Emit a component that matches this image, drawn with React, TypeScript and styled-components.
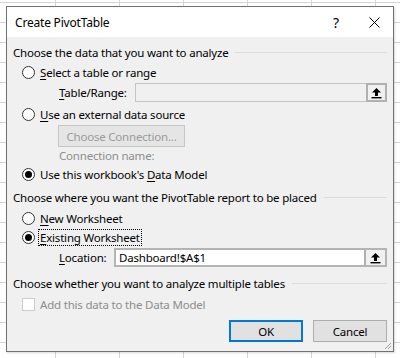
import React from 'react'
import styled, { createGlobalStyle } from 'styled-components'

const GlobalStyle = createGlobalStyle`
  html, body {
    margin: 0;
    padding: 0;
  }
  body {
    width: 400px;
    height: 358px;
    overflow: hidden;
    font-family: 'Noto Sans', 'Liberation Sans', sans-serif;
    font-size: 11.5px;
    letter-spacing: -0.2px;
    color: #000;
    background-color: #fff;
    background-image:
      repeating-linear-gradient(to right, transparent 0, transparent 55px, #d4d4d4 55px, #d4d4d4 56px, transparent 56px, transparent 64px),
      repeating-linear-gradient(to bottom, transparent 0, transparent 2px, #d4d4d4 2px, #d4d4d4 3px, transparent 3px, transparent 20px);
  }
`

const Page = styled.div`
  padding: 6px 0 0 6px;
`

const Dialog = styled.div`
  width: 388px;
  height: 346px;
  box-sizing: border-box;
  border: 1px solid #707070;
  background: #f0f0f0;
  display: flex;
  flex-direction: column;
  position: relative;
  box-shadow: 1px 1px 2px rgba(0, 0, 0, 0.15);
`

const TitleBar = styled.div`
  height: 30px;
  background: #fff;
  display: flex;
  align-items: center;
  padding: 0 0 0 8px;
  font-size: 12px;
`

const Title = styled.div`
  flex: 1;
`

const TitleButton = styled.div`
  width: 38px;
  height: 30px;
  display: flex;
  align-items: center;
  justify-content: center;
  font-size: 14px;
`

const Body = styled.div`
  display: flex;
  flex-direction: column;
  padding: 5px 6px 0 6px;
`

const SectionHeader = styled.div<{ $top?: number }>`
  height: 20px;
  margin-top: ${(p) => p.$top ?? 0}px;
  display: flex;
  align-items: center;
  gap: 7px;
  &::after {
    content: '';
    flex: 1;
    height: 1px;
    background: #dcdcdc;
  }
`

const OptionRow = styled.div<{ $top?: number; $height?: number; $indent?: number }>`
  height: ${(p) => p.$height ?? 20}px;
  margin-top: ${(p) => p.$top ?? 0}px;
  padding-left: ${(p) => p.$indent ?? 9}px;
  display: flex;
  align-items: center;
  gap: 4px;
`

const Radio = styled.span<{ $checked?: boolean }>`
  width: 13px;
  height: 13px;
  box-sizing: border-box;
  border: 1px solid #333;
  border-radius: 50%;
  background: #fff;
  display: flex;
  align-items: center;
  justify-content: center;
  &::after {
    content: '';
    width: 7px;
    height: 7px;
    border-radius: 50%;
    background: #000;
    display: ${(p) => (p.$checked ? 'block' : 'none')};
  }
`

const Checkbox = styled.span`
  width: 13px;
  height: 13px;
  box-sizing: border-box;
  border: 1px solid #cccccc;
  background: #fff;
`

const Label = styled.span<{ $disabled?: boolean; $focused?: boolean }>`
  color: ${(p) => (p.$disabled ? '#8d8d8d' : '#000')};
  outline: ${(p) => (p.$focused ? '1px dotted #000' : 'none')};
  padding: 0 1px;
  line-height: 15px;
`

const Key = styled.span`
  text-decoration: underline;
  text-underline-offset: 2px;
`

const FieldRow = styled.div<{ $top?: number; $labelWidth: number }>`
  height: 19px;
  margin-top: ${(p) => p.$top ?? 0}px;
  padding-left: 45px;
  display: grid;
  grid-template-columns: ${(p) => p.$labelWidth}px 1fr;
  align-items: center;
`

const Field = styled.div<{ $active?: boolean }>`
  height: 19px;
  box-sizing: border-box;
  display: flex;
  border: ${(p) => (p.$active ? '2px solid #b4b4b4' : '1px solid #c4c4c4')};
  background: ${(p) => (p.$active ? '#fff' : '#f0f0f0')};
`

const FieldText = styled.div`
  flex: 1;
  display: flex;
  align-items: center;
  padding-left: 3px;
  line-height: 15px;
`

const CollapseButton = styled.div<{ $active?: boolean }>`
  width: 21px;
  box-sizing: border-box;
  border: ${(p) => (p.$active ? 'none' : '2px solid #b0b0b0')};
  border-left: 2px solid #b0b0b0;
  margin: ${(p) => (p.$active ? '0' : '-1px -1px -1px 0')};
  background: #f0f0f0;
  display: flex;
  align-items: center;
  justify-content: center;
`

const ConnectionButton = styled.div`
  margin: 1px 0 0 45px;
  width: 127px;
  height: 22px;
  box-sizing: border-box;
  border: 1px solid #c6c6c6;
  background: #e5e5e5;
  color: #9a9a9a;
  display: flex;
  align-items: center;
  justify-content: center;
`

const Footer = styled.div`
  margin-top: 6px;
  display: flex;
  justify-content: flex-end;
  gap: 10px;
`

const Button = styled.div<{ $default?: boolean }>`
  width: 74px;
  height: 22px;
  box-sizing: border-box;
  border: ${(p) => (p.$default ? '2px solid #0078d7' : '1px solid #adadad')};
  background: #e1e1e1;
  display: flex;
  align-items: center;
  justify-content: center;
`

const Grip = styled.svg`
  position: absolute;
  right: 1px;
  bottom: 1px;
`

const CollapseIcon = () => (
  <svg width="11" height="12" viewBox="0 0 11 12">
    <path d="M5.5 1 L10 5.5 L7 5.5 L7 9 L4 9 L4 5.5 L1 5.5 Z" fill="#000" />
    <rect x="0.5" y="10" width="10" height="1.4" fill="#000" />
  </svg>
)

const CloseIcon = () => (
  <svg width="11" height="11" viewBox="0 0 11 11">
    <path d="M0.5 0.5 L10.5 10.5 M10.5 0.5 L0.5 10.5" stroke="#000" strokeWidth="1" />
  </svg>
)

export default function App() {
  return (
    <>
      <GlobalStyle />
      <Page>
        <Dialog>
          <TitleBar>
            <Title>Create PivotTable</Title>
            <TitleButton>?</TitleButton>
            <TitleButton>
              <CloseIcon />
            </TitleButton>
          </TitleBar>
          <Body>
            <SectionHeader>Choose the data that you want to analyze</SectionHeader>
            <OptionRow>
              <Radio />
              <Label>
                <Key>S</Key>elect a table or range
              </Label>
            </OptionRow>
            <FieldRow $top={1} $labelWidth={77}>
              <Label>
                <Key>T</Key>able/Range:
              </Label>
              <Field>
                <FieldText />
                <CollapseButton>
                  <CollapseIcon />
                </CollapseButton>
              </Field>
            </FieldRow>
            <OptionRow $top={2}>
              <Radio />
              <Label>
                <Key>U</Key>se an external data source
              </Label>
            </OptionRow>
            <ConnectionButton>Choose Connection...</ConnectionButton>
            <OptionRow $height={17} $indent={45}>
              <Label $disabled>Connection name:</Label>
            </OptionRow>
            <OptionRow>
              <Radio $checked />
              <Label>
                Use this workbook's <Key>D</Key>ata Model
              </Label>
            </OptionRow>
            <SectionHeader $top={3}>Choose where you want the PivotTable report to be placed</SectionHeader>
            <OptionRow $top={1}>
              <Radio />
              <Label>
                <Key>N</Key>ew Worksheet
              </Label>
            </OptionRow>
            <OptionRow $height={18}>
              <Radio $checked />
              <Label $focused>
                <Key>E</Key>xisting Worksheet
              </Label>
            </OptionRow>
            <FieldRow $top={2} $labelWidth={56}>
              <Label>
                <Key>L</Key>ocation:
              </Label>
              <Field $active>
                <FieldText>Dashboard!$A$1</FieldText>
                <CollapseButton $active>
                  <CollapseIcon />
                </CollapseButton>
              </Field>
            </FieldRow>
            <SectionHeader $top={6}>Choose whether you want to analyze multiple tables</SectionHeader>
            <OptionRow $top={1}>
              <Checkbox />
              <Label $disabled>Add this data to the Data Model</Label>
            </OptionRow>
            <Footer>
              <Button $default>OK</Button>
              <Button>Cancel</Button>
            </Footer>
          </Body>
          <Grip width="10" height="10" viewBox="0 0 10 10">
            <path d="M9 3 L3 9 M9 6 L6 9" stroke="#a0a0a0" strokeWidth="1" />
          </Grip>
        </Dialog>
      </Page>
    </>
  )
}
